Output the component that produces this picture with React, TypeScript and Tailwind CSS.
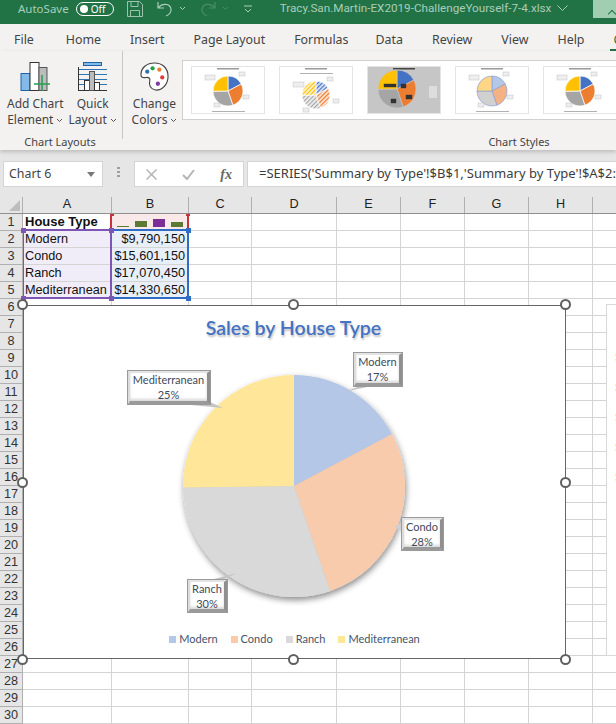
const ui = "font-['Noto_Sans',sans-serif]";

const columns = [
  { name: "A", w: 89 },
  { name: "B", w: 77 },
  { name: "C", w: 63 },
  { name: "D", w: 85 },
  { name: "E", w: 64 },
  { name: "F", w: 64 },
  { name: "G", w: 64 },
  { name: "H", w: 64 },
  { name: "", w: 64 },
];

const cells: Record<number, [string, string]> = {
  2: ["Modern", "$9,790,150"],
  3: ["Condo", "$15,601,150"],
  4: ["Ranch", "$17,070,450"],
  5: ["Mediterranean", "$14,330,650"],
};

const rows = Array.from({ length: 30 }, (_, i) => i + 1);

function polar(cx: number, cy: number, r: number, pct: number) {
  const a = (pct / 100) * Math.PI * 2 - Math.PI / 2;
  return [cx + r * Math.cos(a), cy + r * Math.sin(a)];
}

function slicePath(cx: number, cy: number, r: number, from: number, to: number) {
  const [x1, y1] = polar(cx, cy, r, from);
  const [x2, y2] = polar(cx, cy, r, to);
  const large = to - from > 50 ? 1 : 0;
  return `M${cx} ${cy}L${x1} ${y1}A${r} ${r} 0 ${large} 1 ${x2} ${y2}Z`;
}

const stops = [0, 17.24, 44.71, 74.77, 100];
const office = ["#4472c4", "#ed7d31", "#a5a5a5", "#ffc000"];

interface MiniPieProps {
  colors: string[];
  bg?: string;
  stroke?: string;
  dark?: boolean;
  cx?: number;
  cy?: number;
  r?: number;
  labels?: number[][];
  legendY?: number;
}

const defaultLabels = [
  [48, 6, 6, 4],
  [52, 29, 6, 4],
  [23, 37, 6, 4],
  [14, 9, 10, 5],
];

function MiniPie({ colors, bg = "#ffffff", stroke = "#ffffff", dark, cx = 37, cy = 25, r = 15, labels = defaultLabels, legendY = 45 }: MiniPieProps) {
  return (
    <svg width="74" height="48" viewBox="0 0 74 48" className="shrink-0">
      <rect x="0.5" y="0.5" width="73" height="47" fill={bg} stroke="#e4e4e4" />
      <rect x="26" y="2" width="22" height="1.500" fill={dark ? "#444444" : "#9a9a9a"} />
      {stops.slice(0, 4).map((s, i) => (
        <path key={i} d={slicePath(cx, cy, r, s, stops[i + 1])} fill={colors[i]} stroke={stroke} strokeWidth="0.7" />
      ))}
      {labels.map((l, i) => (
        <rect key={i} x={l[0]} y={l[1]} width={l[2]} height={l[3]} fill={dark ? "#333333" : "#eeeeee"} stroke={dark ? "#333333" : "#b5b5b5"} strokeWidth="0.4" />
      ))}
      <rect x={dark ? 62 : 21} y={legendY} width={dark ? 8 : 33} height={dark ? 12 : 1} fill={dark ? "#dddddd" : "#b0b0b0"} />
    </svg>
  );
}

function RibbonButton({ top, bottom, children }: { top: string; bottom: string; children: React.ReactNode }) {
  return (
    <div className="flex flex-col items-center text-[12px] leading-[16px] text-[#444444]">
      <div className="h-[31px] flex items-end">{children}</div>
      <div className="mt-[5px]">{top}</div>
      <div className="flex items-center gap-[3px]">
        {bottom}
        <svg width="7" height="5" viewBox="0 0 7 5"><path d="M1 1l2.500 2.500L6 1" fill="none" stroke="#555555" /></svg>
      </div>
    </div>
  );
}

function Callout({ className, lines }: { className: string; lines: string[] }) {
  return (
    <div className={`absolute bg-white border-t-2 border-l-2 border-r-[3px] border-b-[3px] border-t-[#e4e4e4] border-l-[#dcdcdc] border-r-[#8f8f8f] border-b-[#9a9a9a] shadow-[0_0_0_1px_#9a9a9a,inset_0_-2px_3px_#d8d8d8] flex flex-col justify-center text-center text-[11px] leading-[15px] text-[#404a5a] font-['Lato',sans-serif] ${className}`}>
      {lines.map((l) => (
        <div key={l}>{l}</div>
      ))}
    </div>
  );
}

function Handle({ className }: { className: string }) {
  return <div className={`absolute w-[11px] h-[11px] rounded-full bg-white border-2 border-[#5f5f5f] ${className}`} />;
}

function Sq({ className }: { className: string }) {
  return <div className={`absolute w-[5px] h-[5px] ${className}`} />;
}

const legend = [
  { label: "Modern", color: "#b4c7e7" },
  { label: "Condo", color: "#f8cbad" },
  { label: "Ranch", color: "#d9d9d9" },
  { label: "Mediterranean", color: "#ffe699" },
];

export default function App() {
  return (
    <div className={`relative w-[616px] h-[724px] overflow-hidden bg-white ${ui}`}>
      {/* title bar */}
      <div className="h-[24px] bg-[#217346] flex items-center pb-[7px] text-[12px] text-[#a9cdb8] relative">
        <span className="ml-[18px] text-[11.500px]">AutoSave</span>
        <div className="ml-[7px] w-[38px] h-[14px] rounded-full border border-white flex items-center px-[3px] gap-[3px]">
          <div className="w-[8px] h-[8px] rounded-full bg-white" />
          <span className="text-[10px] leading-none text-white">Off</span>
        </div>
        <svg width="16" height="16" viewBox="0 0 16 16" className="ml-[13px]" fill="none" stroke="#9cc4ad">
          <path d="M.5 .5h12l3 3v12H.5z M4 .5v5h7v-5 M3.500 15.500v-6h9v6" />
        </svg>
        <svg width="16" height="16" viewBox="0 0 16 16" className="ml-[14px]" fill="none" stroke="#a9cdb8" strokeWidth="1.200">
          <path d="M1 1v6h6 M1.500 6.500C5 2 13 2 14 8c.5 3-2 6-5 7" />
        </svg>
        <svg width="7" height="5" viewBox="0 0 7 5" className="ml-[6px]"><path d="M1 1l2.500 2.500L6 1" fill="none" stroke="#a9cdb8" /></svg>
        <svg width="16" height="16" viewBox="0 0 16 16" className="ml-[14px]" fill="none" stroke="#4c8c69" strokeWidth="1.200">
          <path d="M15 1v6H9 M14.500 6.500C11 2 3 2 2 8c-.5 3 2 6 5 7" />
        </svg>
        <svg width="7" height="5" viewBox="0 0 7 5" className="ml-[6px]"><path d="M1 1l2.500 2.500L6 1" fill="none" stroke="#4c8c69" /></svg>
        <svg width="8" height="8" viewBox="0 0 8 8" className="ml-[15px]" fill="none" stroke="#a9cdb8"><path d="M0 1h8 M1 4l3 3 3-3" /></svg>
        <span className="ml-[28px] font-['Roboto',sans-serif] text-[11.700px] whitespace-nowrap">Tracy.San.Martin-EX2019-ChallengeYourself-7-4.xlsx</span>
        <svg width="11" height="7" viewBox="0 0 11 7" className="ml-[6px]" fill="none" stroke="#a9cdb8"><path d="M.5 .5l5 5 5-5" /></svg>
        <div className="absolute right-0 top-0 w-[23px] h-[18px] bg-[#9fcfb0]">
          <div className="absolute right-[1px] bottom-[1px] w-[6px] h-[6px] border-l border-t border-[#217346] rotate-45" />
        </div>
      </div>

      {/* tabs */}
      <div className="h-[27px] bg-[#f3f2f1] flex items-center gap-[29px] pl-[14px] pt-[5px] text-[12.400px] text-[#444444] whitespace-nowrap relative">
        <span>File</span>
        <span className="ml-[3px]">Home</span>
        <span>Insert</span>
        <span>Page Layout</span>
        <span>Formulas</span>
        <span className="ml-[-2px]">Data</span>
        <span>Review</span>
        <span>View</span>
        <span>Help</span>
        <span className="text-[#217346]">C</span>
        <div className="absolute right-0 bottom-[-1px] w-[6px] h-[3px] bg-[#217346]" />
      </div>

      {/* ribbon */}
      <div className="h-[99px] bg-[#f3f2f1] flex flex-col shadow-[0_2px_4px_rgba(0,0,0,0.18)] relative">
        <div className="h-[80px] flex items-start">
          <div className="w-[123px] h-[88px] border-r border-[#c8c6c4] flex pt-[9px] pl-[7px] gap-[5px] shrink-0">
            <RibbonButton top="Add Chart" bottom="Element">
              <svg width="30" height="29" viewBox="0 0 30 29">
                <rect x="1" y="11.500" width="9" height="17" fill="#83bbe8" stroke="#1f64a8" />
                <rect x="10" y="0.500" width="9" height="28" fill="#ffffff" stroke="#333333" />
                <rect x="19" y="5.500" width="8" height="23" fill="#bcbcbc" stroke="#555555" />
                <path d="M22 13v16 M14 22h16" stroke="#22a04e" strokeWidth="1.500" />
              </svg>
            </RibbonButton>
            <RibbonButton top="Quick" bottom="Layout">
              <svg width="29" height="29" viewBox="0 0 29 29">
                <rect x="5.500" y="0.500" width="18" height="3" fill="#83bbe8" stroke="#1f64a8" />
                <path d="M1 7.500h28 M1 12.500h28 M1 17.500h28 M1 22.500h28" stroke="#2e75b6" />
                <path d="M.5 5v24 M0 28.500h29" stroke="#333333" />
                <rect x="6.500" y="18.500" width="5" height="10" fill="#ffffff" stroke="#333333" />
                <rect x="11.500" y="9.500" width="5" height="19" fill="#bcbcbc" stroke="#555555" />
                <rect x="16.500" y="20.500" width="5" height="8" fill="#ffffff" stroke="#333333" />
              </svg>
            </RibbonButton>
          </div>
          <div className="w-[59px] flex justify-center pt-[9px] pl-[4px] shrink-0">
            <RibbonButton top="Change" bottom="Colors">
              <svg width="29" height="29" viewBox="0 0 30 30">
                <path d="M15 1C7 1 1 6 1 13c0 3 2 3.500 5 3 3-.5 5 .5 4 4-1 4 1 8 6 9 7 .5 13-6 13-14C29 6 23 1 15 1z" fill="#ffffff" stroke="#444444" strokeWidth="1.200" />
                <circle cx="7.500" cy="10" r="2.200" fill="#2e75b6" />
                <circle cx="13" cy="6.500" r="2.200" fill="#22a04e" />
                <circle cx="20" cy="8" r="2.200" fill="#ed7d31" />
                <circle cx="23" cy="16" r="2.200" fill="#e03a3a" />
                <circle cx="18.500" cy="22.500" r="2.200" fill="#7c3a9e" />
              </svg>
            </RibbonButton>
          </div>
          <div className="flex-1 mt-[9px] h-[60px] bg-white border border-[#d2d0ce] border-r-0 flex items-center pl-[8px] gap-[14px] overflow-hidden">
            <MiniPie colors={office} />
            <svg width="0" height="0" className="absolute">
              <defs>
                <pattern id="hatchBlue" width="3" height="3" patternUnits="userSpaceOnUse" patternTransform="rotate(45)"><rect width="3" height="3" fill="#dfe7f6" /><rect width="1.200" height="3" fill="#4472c4" /></pattern>
                <pattern id="hatchOrange" width="3" height="3" patternUnits="userSpaceOnUse" patternTransform="rotate(45)"><rect width="3" height="3" fill="#fde6d8" /><rect width="1.200" height="3" fill="#ed7d31" /></pattern>
                <pattern id="hatchGray" width="3" height="3" patternUnits="userSpaceOnUse" patternTransform="rotate(45)"><rect width="3" height="3" fill="#f0f0f0" /><rect width="1.200" height="3" fill="#a5a5a5" /></pattern>
                <pattern id="hatchYellow" width="3" height="3" patternUnits="userSpaceOnUse" patternTransform="rotate(45)"><rect width="3" height="3" fill="#fff4d0" /><rect width="1.200" height="3" fill="#ffc000" /></pattern>
              </defs>
            </svg>
            <MiniPie
              colors={["url(#hatchBlue)", "url(#hatchOrange)", "url(#hatchGray)", "url(#hatchYellow)"]}
              cy={29}
              r={14}
              labels={[[48, 11, 6, 4], [54, 33, 6, 4], [24, 42, 6, 4], [14, 16, 11, 5]]}
              legendY={7}
            />
            <MiniPie
              colors={office}
              bg="#c6c6c6"
              stroke="#c6c6c6"
              dark
              cx={30}
              cy={23}
              r={19}
              labels={[[17, 18, 12, 3], [34, 18, 5, 4], [39, 29, 6, 4], [24, 33, 5, 4]]}
              legendY={20}
            />
            <MiniPie colors={["#b4c7e7", "#f4b183", "#d0d0d0", "#ffd685"]} stroke="#8aa2d0" />
            <MiniPie colors={office} />
          </div>
        </div>
        <div className="flex text-[11px] text-[#444444] mt-[3px]">
          <div className="w-[120px] text-center">Chart Layouts</div>
          <div className="ml-[339px] w-[120px] text-center">Chart Styles</div>
        </div>
      </div>

      {/* formula bar */}
      <div className="h-[47px] bg-[#e6e6e6] flex items-start pt-[11px] pl-[3px] text-[12.400px] text-[#444444]">
        <div className="w-[100px] h-[26px] bg-white border border-[#d4d4d4] flex items-center justify-between pl-[5px] pr-[7px]">
          <span>Chart 6</span>
          <svg width="8" height="5" viewBox="0 0 8 5"><path d="M0 0h8L4 5z" fill="#777777" /></svg>
        </div>
        <div className="w-[31px] flex justify-center pt-[6px]">
          <svg width="3" height="11" viewBox="0 0 3 11" fill="#a0a0a0"><rect width="3" height="2" /><rect y="4" width="3" height="2" /><rect y="8" width="3" height="2" /></svg>
        </div>
        <div className="w-[110px] h-[26px] bg-white border border-[#d4d4d4] flex items-center justify-between pl-[11px] pr-[11px]">
          <svg width="11" height="11" viewBox="0 0 11 11" stroke="#b5b5b5" strokeWidth="1.500"><path d="M.5 .5l10 10 M10.500 .5l-10 10" /></svg>
          <svg width="13" height="11" viewBox="0 0 13 11" fill="none" stroke="#b5b5b5" strokeWidth="2"><path d="M1 6l4 4 7-9" /></svg>
          <span className="font-['Liberation_Serif',serif] italic font-bold text-[14px] text-[#666666]">fx</span>
        </div>
        <div className="ml-[3px] flex-1 h-[26px] bg-white border border-[#d4d4d4] border-r-0 pl-[11px] flex items-center overflow-hidden whitespace-nowrap text-[#3c3c3c] text-[13px]">
          =SERIES('Summary by Type'!$B$1,'Summary by Type'!$A$2:
        </div>
      </div>

      {/* column header */}
      <div className="flex h-[17px] bg-[#e6e6e6] border-b border-[#8f8f8f] font-['Liberation_Sans',sans-serif] text-[12.700px] text-[#222222]">
        <div className="w-[23px] shrink-0 relative border-r border-[#b0b0b0]">
          <div className="absolute right-[2px] bottom-[2px] w-0 h-0 border-l-[11px] border-l-transparent border-b-[11px] border-b-[#bdbdbd]" />
        </div>
        {columns.map((c) => (
          <div key={c.name} style={{ width: c.w }} className="shrink-0 border-r border-[#b0b0b0] flex items-center justify-center">
            {c.name}
          </div>
        ))}
      </div>

      {/* sheet rows */}
      <div className="font-['Liberation_Sans',sans-serif] text-[12.700px] text-[#111111]">
        {rows.map((r) => (
          <div key={r} className="flex h-[17px]">
            <div className="w-[23px] shrink-0 bg-[#e6e6e6] border-r border-b border-[#b0b0b0] text-center text-[#333333] leading-[16px]">{r}</div>
            {columns.map((c, i) => {
              let bg = "";
              if (i === 0 && r >= 2 && r <= 5) bg = "bg-[#f0edf8]";
              if (i === 1 && r >= 2 && r <= 5) bg = "bg-[#e9eff8]";
              if (i === 1 && r === 1) bg = "bg-[#f9e9e9]";
              return (
                <div key={c.name} style={{ width: c.w }} className={`shrink-0 border-r border-b border-[#d4d4d4] leading-[16px] px-[2px] whitespace-nowrap ${bg} ${i === 1 ? "text-right pr-[3px]" : ""}`}>
                  {r === 1 && i === 0 && <b className="text-[13px]">House Type</b>}
                  {r === 1 && i === 1 && (
                    <div className="flex items-end justify-center gap-[6px] h-[13px]">
                      <div className="w-[12px] h-[1px] bg-[#5b7a34]" />
                      <div className="w-[12px] h-[6px] bg-[#5b7a34]" />
                      <div className="w-[12px] h-[8px] bg-[#7a2f96]" />
                      <div className="w-[12px] h-[5px] bg-[#5b7a34]" />
                    </div>
                  )}
                  {r >= 2 && r <= 5 && i < 2 && cells[r][i]}
                </div>
              );
            })}
          </div>
        ))}
      </div>

      {/* range highlights */}
      <div className="absolute left-[23px] top-[229px] w-[89px] h-[70px] border-y-2 border-r-2 border-l border-[#7d55b5]" />
      <div className="absolute left-[112px] top-[229px] w-[77px] h-[70px] border-y-2 border-r-2 border-[#2f6cc4]" />
      <div className="absolute left-[110px] top-[214px] w-[79px] h-[16px] border-x-2 border-[#c8323c]" />
      <Sq className="left-[21px] top-[228px] bg-[#7d55b5]" />
      <Sq className="left-[109px] top-[228px] bg-[#7d55b5]" />
      <Sq className="left-[21px] top-[296px] bg-[#7d55b5]" />
      <Sq className="left-[109px] top-[296px] bg-[#7d55b5]" />
      <Sq className="left-[186px] top-[228px] bg-[#2f6cc4]" />
      <Sq className="left-[186px] top-[296px] bg-[#2f6cc4]" />
      <div className="absolute left-[110px] top-[214px] w-[4px] h-[2px] bg-[#c8323c]" />
      <div className="absolute left-[186px] top-[214px] w-[4px] h-[2px] bg-[#c8323c]" />

      {/* next chart, cut off at the window edge */}
      <div className="absolute left-[606px] top-[304px] w-[20px] h-[352px] bg-white border border-[#d9d9d9] font-['Lato',sans-serif] text-[11px] leading-[15px] text-[#777777]">
        <div className="ml-[8px] mt-[44px] flex flex-col gap-[15px]">
          <span>$</span>
          <span>$</span>
          <span>$</span>
          <span>$</span>
          <span>$</span>
        </div>
      </div>

      {/* chart */}
      <div className="absolute left-[23px] top-[305px] w-[543px] h-[354px] bg-white border border-[#666666] font-['Lato',sans-serif]">
        <div className="text-center mt-[9px] pr-[2px] text-[19.500px] leading-[26px] font-semibold text-[#4472c4] [text-shadow:1px_2px_2px_rgba(0,0,0,0.25)]">
          Sales by House Type
        </div>
        <svg width="240" height="240" viewBox="0 0 240 240" className="absolute left-[150px] top-[60px]">
          <defs>
            <filter id="pieShadow" x="-10%" y="-10%" width="120%" height="120%">
              <feDropShadow dx="1" dy="3" stdDeviation="3" floodColor="#000000" floodOpacity="0.45" />
            </filter>
          </defs>
          <g filter="url(#pieShadow)">
            {legend.map((l, i) => (
              <path key={l.label} d={slicePath(120, 120, 111, stops[i], stops[i + 1])} fill={l.color} />
            ))}
          </g>
        </svg>
        <svg width="542" height="353" className="absolute left-0 top-0 pointer-events-none">
          <path d="M348 80L320 86L336 80z" fill="#c4c4c4" />
          <path d="M156 98L199 102L186 96z" fill="#c4c4c4" />
          <path d="M371 221L378 216L378 226z" fill="#d0d0d0" />
          <path d="M213 267L190 273L200 273z" fill="#c4c4c4" />
        </svg>
        <Callout className="left-[330px] top-[47px] w-[48px] h-[33px]" lines={["Modern", "17%"]} />
        <Callout className="left-[104px] top-[65px] w-[82px] h-[33px]" lines={["Mediterranean", "25%"]} />
        <Callout className="left-[378px] top-[212px] w-[41px] h-[32px]" lines={["Condo", "28%"]} />
        <Callout className="left-[164px] top-[274px] w-[39px] h-[32px]" lines={["Ranch", "30%"]} />
        <div className="absolute left-0 right-0 top-[326px] flex justify-center gap-[13px] text-[11px] leading-[14px] text-[#44546a]">
          {legend.map((l) => (
            <div key={l.label} className="flex items-center gap-[3px]">
              <div className="w-[7px] h-[7px]" style={{ backgroundColor: l.color }} />
              {l.label}
            </div>
          ))}
        </div>
      </div>
      <Handle className="left-[288px] top-[299px]" />
      <Handle className="left-[560px] top-[299px]" />
      <Handle className="left-[560px] top-[477px]" />
      <Handle className="left-[560px] top-[654px]" />
      <Handle className="left-[288px] top-[654px]" />
      <Handle className="left-[17px] top-[654px]" />
      <Handle className="left-[17px] top-[477px]" />
      <Handle className="left-[17px] top-[299px]" />
    </div>
  );
}
